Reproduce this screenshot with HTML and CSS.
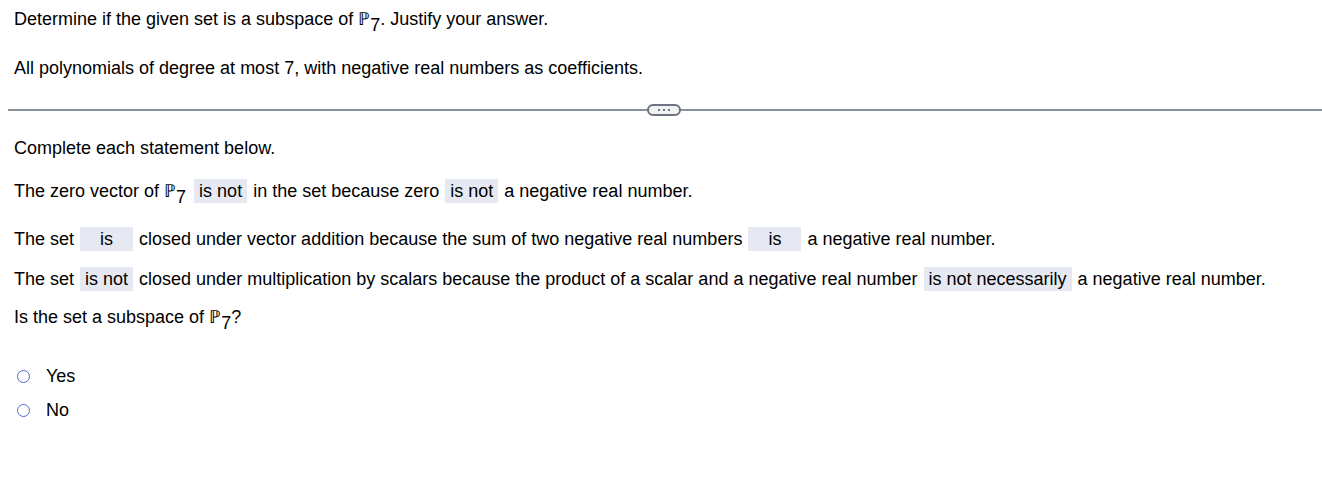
FILE: index.html
```html
<html lang="en">
    <head>
        <meta charset="UTF-8" />
        <meta name="viewport" content="width=device-width, initial-scale=1.0" />
        <title>Subspace</title>
        <link rel="stylesheet" href="styles.css">
    </head>
    <body>
        <div class="question">
            <p class="line first">
                Determine if the given set is a subspace of
                <span class="space">ℙ<sub>7</sub></span>. Justify your answer.
            </p>
            <p class="line second">
                All polynomials of degree at most 7, with negative real numbers as coefficients.
            </p>
        </div>

        <div class="divider">
            <span class="pill"><i></i><i></i><i></i></span>
        </div>

        <div class="answer">
            <p class="line intro">Complete each statement below.</p>
            <p class="line tall zero">
                The zero vector of <span class="space gap">ℙ<sub>7</sub></span>
                <span class="pick">is not</span> in the set because zero
                <span class="pick">is not</span> a negative real number.
            </p>
            <p class="line tall add">
                The set <span class="pick wide">is</span> closed under vector addition because the sum of two negative real numbers
                <span class="pick wide">is</span> a negative real number.
            </p>
            <p class="line tall mult">
                The set <span class="pick">is not</span> closed under multiplication by scalars because the product of a scalar and a negative real number
                <span class="pick">is not necessarily</span> a negative real number.
            </p>
            <p class="line ask">
                Is the set a subspace of <span class="space">ℙ<sub>7</sub></span>?
            </p>

            <div class="options">
                <label class="option"><span class="radio"></span>Yes</label>
                <label class="option"><span class="radio"></span>No</label>
            </div>
        </div>
    </body>
</html>
```

FILE: styles.css
```css
* {
    margin: 0;
    padding: 0;
    box-sizing: border-box;
}

body {
    background-color: #ffffff;
    color: #000000;
    font-family: "Liberation Sans", Arial, sans-serif;
    font-size: 18px;
}

.line {
    line-height: 22px;
    padding-left: 14px;
    white-space: nowrap;
}

.line.tall {
    line-height: 24px;
}

.space sub {
    font-size: 18px;
    vertical-align: -6px;
    line-height: 0;
}

.space.gap sub {
    margin-right: 2px;
}

.first {
    margin-top: 8px;
}

.second {
    margin-top: 27px;
}

.divider {
    position: relative;
    margin: 30px 0 0 8px;
    height: 2px;
    background-color: #8a929e;
}

.pill {
    position: absolute;
    left: 639px;
    top: -5px;
    display: flex;
    justify-content: center;
    align-items: center;
    gap: 3px;
    width: 34px;
    height: 12px;
    border: 2px solid #6b7380;
    border-radius: 6px;
    background-color: #f2f3f5;
}

.pill i {
    display: block;
    width: 2px;
    height: 2px;
    background-color: #6b7380;
}

.intro {
    margin-top: 26px;
}

.zero {
    margin-top: 20px;
}

.add {
    margin-top: 24px;
}

.mult {
    margin-top: 16px;
}

.ask {
    margin-top: 15px;
}

.pick {
    display: inline-block;
    background-color: #e6e9f1;
    padding: 0 5px;
    margin: 0 1px;
}

.pick.wide {
    padding: 0 20px;
    margin: 0 1px;
}

.options {
    display: flex;
    flex-direction: column;
    gap: 12px;
    margin-top: 37px;
    padding-left: 17px;
}

.option {
    display: flex;
    align-items: center;
    line-height: 22px;
}

.radio {
    width: 13px;
    height: 13px;
    margin-right: 16px;
    border: 1.5px solid #4f6fd1;
    border-radius: 50%;
    background-color: #ffffff;
}
```
